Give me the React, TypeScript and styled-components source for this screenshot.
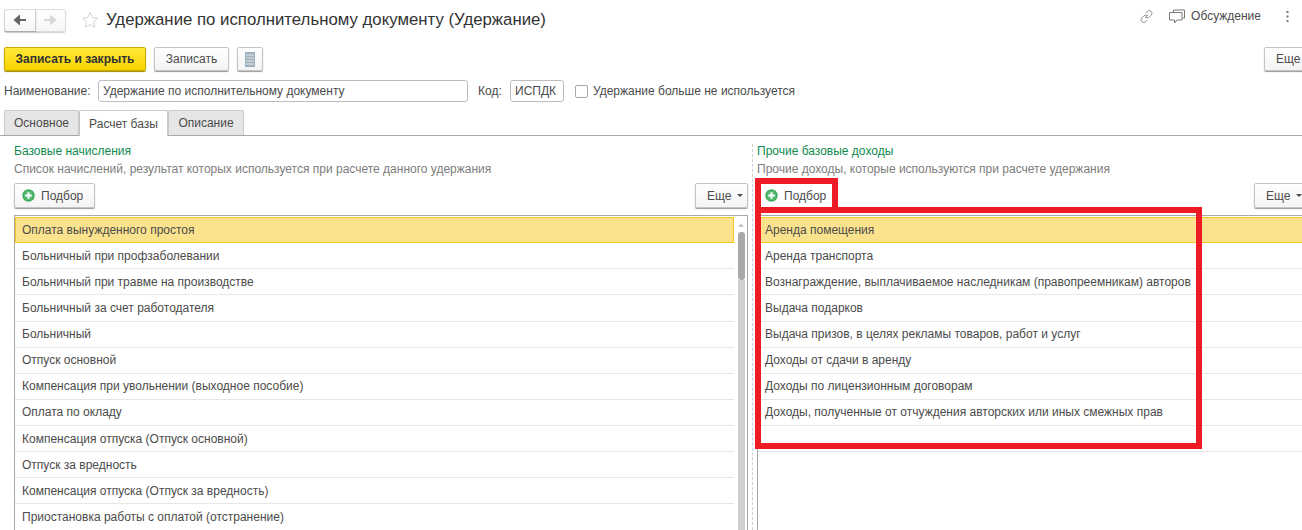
import React from "react";
import styled, { createGlobalStyle } from "styled-components";

const Global = createGlobalStyle`
  html, body { margin: 0; padding: 0; height: 530px; overflow: hidden; background: #fff; }
  body { font-family: "Liberation Sans", Arial, sans-serif; font-size: 12px; color: #4b4b4b; }
  * { box-sizing: border-box; }
`;

const Page = styled.div`
  position: relative;
  width: 1302px;
  height: 530px;
  overflow: hidden;
  background: #fff;
`;
const Header = styled.header`
  display: flex;
  align-items: center;
  height: 34px;
  padding: 6px 0 0 4px;
`;
const NavGroup = styled.div`
  display: flex;
  width: 62px;
  height: 23px;
  border: 1px solid #dcdcdc;
  border-radius: 3px;
  box-shadow: 0 1px 1px #cfcfcf;
  background: linear-gradient(#fff, #f6f6f6);
`;
const NavBtn = styled.div<{ $on?: boolean }>`
  flex: 1;
  display: flex;
  align-items: center;
  justify-content: center;
  ${(p) => (p.$on ? "border-right: 1px solid #cfcfcf; box-shadow: 0 1px 1px #aaa;" : "")}
`;
const StarBox = styled.div`
  display: flex;
  margin-left: 15px;
  width: 20px;
`;
const Title = styled.h1`
  margin: 0 0 0 5px;
  font-size: 16.8px;
  font-weight: 400;
  color: #333;
  white-space: nowrap;
`;
const HeaderRight = styled.div`
  margin-left: auto;
  display: flex;
  align-items: center;
  height: 20px;
  margin-top: -8px;
  padding-right: 13px;
`;
const ChatIcon = styled.svg`
  margin-left: 15px;
`;
const Discuss = styled.span`
  margin: 0 25px 0 6px;
  color: #4b4b4b;
`;
const CommandBar = styled.div`
  display: flex;
  align-items: center;
  height: 24px;
  margin-top: 13px;
  padding-left: 4px;
`;
const Btn = styled.button<{ $w: number; $ml?: number; $h?: number }>`
  display: flex;
  align-items: center;
  justify-content: center;
  flex: none;
  width: ${(p) => p.$w}px;
  height: ${(p) => p.$h ?? 24}px;
  margin-left: ${(p) => p.$ml ?? 0}px;
  padding: 0;
  font: 12px "Liberation Sans", Arial, sans-serif;
  color: #4b4b4b;
  background: linear-gradient(#fff, #f4f4f4);
  border: 1px solid #c4c4c4;
  border-radius: 2px;
  box-shadow: 0 1px 1px #9a9a9a;
`;
const PrimaryBtn = styled(Btn)`
  background: linear-gradient(#ffe93a, #f9d400);
  border-color: #c9a800;
  color: #333;
  font-weight: 700;
  box-shadow: 0 1px 1px #a08a00;
`;
const MoreTop = styled(Btn)`
  margin-left: auto;
  margin-right: -24px;
  justify-content: flex-start;
  padding-left: 11px;
`;
const FormRow = styled.div`
  display: flex;
  align-items: center;
  height: 22px;
  margin-top: 9px;
  padding-left: 4px;
`;
const Label = styled.label<{ $w: number; $ml?: number }>`
  flex: none;
  width: ${(p) => p.$w}px;
  margin-left: ${(p) => p.$ml ?? 0}px;
  color: #4b4b4b;
`;
const Field = styled.div<{ $w: number }>`
  flex: none;
  display: flex;
  align-items: center;
  width: ${(p) => p.$w}px;
  height: 22px;
  padding-left: 4px;
  border: 1px solid #bdbdbd;
  border-radius: 3px;
  color: #4b4b4b;
`;
const Check = styled.span`
  flex: none;
  width: 13px;
  height: 13px;
  margin: 0 5px 0 11px;
  border: 1px solid #a8a8a8;
  border-radius: 2px;
`;
const Tabs = styled.div`
  display: flex;
  height: 26px;
  margin-top: 8px;
  padding-left: 4px;
  border-bottom: 1px solid #a9a9a9;
`;
const Tab = styled.div<{ $w: number; $active?: boolean }>`
  display: flex;
  align-items: center;
  justify-content: center;
  width: ${(p) => p.$w}px;
  height: ${(p) => (p.$active ? 26 : 25)}px;
  background: ${(p) => (p.$active ? "#fff" : "#e6e6e6")};
  border: 1px solid #c8c8c8;
  border-bottom: none;
  border-radius: 2px 2px 0 0;
  position: relative;
  z-index: 1;
`;
const Columns = styled.div`
  display: grid;
  grid-template-columns: 738px 560px;
  padding: 8px 0 0 14px;
  height: 394px;
`;
const Column = styled.section<{ $right?: boolean }>`
  display: flex;
  flex-direction: column;
  min-width: 0;
  ${(p) => (p.$right ? `padding-left: 4px; border-left: 1px dashed #cfcfcf;` : "")}
`;
const Heading = styled.div`
  height: 14px;
  line-height: 14px;
  color: #0f8a4f;
`;
const Hint = styled.div`
  height: 14px;
  line-height: 14px;
  margin-top: 4px;
  color: #7d7d7d;
`;
const Bar = styled.div<{ $pr: number }>`
  display: flex;
  align-items: center;
  justify-content: space-between;
  height: 25px;
  margin-top: 7px;
  padding-right: ${(p) => p.$pr}px;
`;
const PickBtn = styled(Btn)`
  justify-content: flex-start;
  gap: 6px;
  padding-left: 7px;
`;
const PickFlat = styled.div`
  display: flex;
  align-items: center;
  gap: 6px;
  padding-left: 8px;
  height: 25px;
`;
const Caret = styled.span`
  width: 0;
  height: 0;
  margin-left: 6px;
  border-left: 3px solid transparent;
  border-right: 3px solid transparent;
  border-top: 3px solid #4b4b4b;
`;
const MoreBtn = styled(Btn)`
  justify-content: flex-start;
  padding-left: 11px;
`;
const Table = styled.div<{ $w: number }>`
  position: relative;
  width: ${(p) => p.$w}px;
  height: 315px;
  margin-top: 7px;
  padding-top: 1px;
  border-top: 1px solid #a9a9a9;
  border-left: 1px solid #a9a9a9;
  overflow: hidden;
`;
const Row = styled.div<{ $sel?: boolean }>`
  display: flex;
  align-items: center;
  height: 26.135px;
  padding-left: ${(p) => (p.$sel ? 6 : 7)}px;
  color: #4b4b4b;
  white-space: nowrap;
  border-bottom: 1px solid #e6e6e6;
  ${(p) =>
    p.$sel
      ? `background: #fbe38e; border: 1px solid #f4c722; box-shadow: 0 1px 0 #fff;`
      : ""}
`;
const LeftRows = styled.div`
  width: 719px;
`;
const Scroll = styled.div`
  position: absolute;
  top: 1px;
  right: 3px;
  bottom: 0;
  width: 8px;
  display: flex;
  flex-direction: column;
  align-items: center;
`;
const ScrollArrow = styled.span`
  margin-top: 6px;
  width: 0;
  height: 0;
  border-left: 3px solid transparent;
  border-right: 3px solid transparent;
  border-bottom: 4px solid #c8c8c8;
`;
const Thumb = styled.div`
  margin-top: 5px;
  width: 7px;
  height: 48px;
  border-radius: 3px;
  background: #a9a9a9;
`;
const Track = styled.div`
  width: 7px;
  flex: 1;
  background: #cfcfcf;
`;
const TableEdge = styled.div`
  position: absolute;
  top: 0;
  right: 0;
  bottom: 0;
  width: 1px;
  background: #a9a9a9;
`;
const Callout = styled.div<{ $x: number; $y: number; $w: number; $h: number }>`
  position: absolute;
  left: ${(p) => p.$x}px;
  top: ${(p) => p.$y}px;
  width: ${(p) => p.$w}px;
  height: ${(p) => p.$h}px;
  border: 6px solid #ed1c24;
  pointer-events: none;
`;

const Plus = () => (
  <svg width="13" height="13" viewBox="0 0 13 13">
    <circle cx="6.5" cy="6.5" r="6.2" fill="#3fa95b" />
    <circle cx="6.5" cy="6.5" r="4.8" fill="#55bb6e" />
    <path d="M6.5 3.2v6.6M3.2 6.5h6.6" stroke="#fff" strokeWidth="2" />
  </svg>
);

const left = [
  "Оплата вынужденного простоя",
  "Больничный при профзаболевании",
  "Больничный при травме на производстве",
  "Больничный за счет работодателя",
  "Больничный",
  "Отпуск основной",
  "Компенсация при увольнении (выходное пособие)",
  "Оплата по окладу",
  "Компенсация отпуска (Отпуск основной)",
  "Отпуск за вредность",
  "Компенсация отпуска (Отпуск за вредность)",
  "Приостановка работы с оплатой (отстранение)",
];
const right = [
  "Аренда помещения",
  "Аренда транспорта",
  "Вознаграждение, выплачиваемое наследникам (правопреемникам) авторов",
  "Выдача подарков",
  "Выдача призов, в целях рекламы товаров, работ и услуг",
  "Доходы от сдачи в аренду",
  "Доходы по лицензионным договорам",
  "Доходы, полученные от отчуждения авторских или иных смежных прав",
  "",
];

export default function App() {
  return (
    <Page>
      <Global />
      <Header>
        <NavGroup>
          <NavBtn $on>
            <svg width="14" height="10" viewBox="0 0 14 10">
              <path d="M13 5H5M6 1.5 2 5l4 3.5z" stroke="#666" strokeWidth="2" fill="#666" />
            </svg>
          </NavBtn>
          <NavBtn>
            <svg width="14" height="10" viewBox="0 0 14 10">
              <path d="M1 5h8M8 1.5 12 5 8 8.500z" stroke="#d8d8d8" strokeWidth="2" fill="#d8d8d8" />
            </svg>
          </NavBtn>
        </NavGroup>
        <StarBox>
          <svg width="18" height="18" viewBox="0 0 18 18">
            <path d="M9 1.500l2.300 5 5.400.6-4 3.700 1.100 5.400L9 13.500l-4.800 2.700 1.100-5.400-4-3.700 5.400-.6z" fill="none" stroke="#d4d4d4" />
          </svg>
        </StarBox>
        <Title>Удержание по исполнительному документу (Удержание)</Title>
        <HeaderRight>
          <svg width="15" height="15" viewBox="0 0 16 16" fill="none" stroke="#8c8c8c" strokeWidth="1">
            <path d="M6.500 9.500 10 6M7 4.500l2-2a2.700 2.700 0 0 1 4 4l-2 2a2.700 2.700 0 0 1-3.500.3" />
            <path d="M9 11.500l-2 2a2.700 2.700 0 0 1-4-4l2-2A2.700 2.700 0 0 1 8.500 7.200" />
          </svg>
          <ChatIcon width="16" height="15" viewBox="0 0 16 15" fill="none" stroke="#777" strokeWidth="1">
            <path d="M4.500 3V1h11v8h-2" />
            <path d="M.5 3.500h12.500v7.500H8l-2.500 3v-3h-5z" />
          </ChatIcon>
          <Discuss>Обсуждение</Discuss>
          <svg width="3" height="11" viewBox="0 0 3 11" fill="#777">
            <rect x="0.500" y="0" width="2" height="2" />
            <rect x="0.500" y="4.500" width="2" height="2" />
            <rect x="0.500" y="9" width="2" height="2" />
          </svg>
        </HeaderRight>
      </Header>
      <CommandBar>
        <PrimaryBtn $w={142}>Записать и закрыть</PrimaryBtn>
        <Btn $w={75} $ml={8}>Записать</Btn>
        <Btn $w={26} $ml={8}>
          <svg width="10" height="15" viewBox="0 0 10 15">
            <rect width="10" height="15" fill="#9fb0bd" />
            <path d="M1 3h8M1 6h8M1 9h8M1 12h8" stroke="#e4eaee" strokeWidth="1" />
          </svg>
        </Btn>
        <MoreTop $w={62}>Еще</MoreTop>
      </CommandBar>
      <FormRow>
        <Label $w={94}>Наименование:</Label>
        <Field $w={370}>Удержание по исполнительному документу</Field>
        <Label $w={32} $ml={10}>Код:</Label>
        <Field $w={54}>ИСПДК</Field>
        <Check />
        <span>Удержание больше не используется</span>
      </FormRow>
      <Tabs>
        <Tab $w={75}>Основное</Tab>
        <Tab $w={89} $active>Расчет базы</Tab>
        <Tab $w={76}>Описание</Tab>
      </Tabs>
      <Columns>
        <Column>
          <Heading>Базовые начисления</Heading>
          <Hint>Список начислений, результат которых используется при расчете данного удержания</Hint>
          <Bar $pr={4}>
            <PickBtn $w={81} $h={25}><Plus />Подбор</PickBtn>
            <MoreBtn $w={53} $h={25}>Еще<Caret /></MoreBtn>
          </Bar>
          <Table $w={734}>
            <LeftRows>
              {left.map((t, i) => (
                <Row key={t} $sel={i === 0}>{t}</Row>
              ))}
            </LeftRows>
            <Scroll>
              <ScrollArrow />
              <Thumb />
              <Track />
            </Scroll>
            <TableEdge />
          </Table>
        </Column>
        <Column $right>
          <Heading>Прочие базовые доходы</Heading>
          <Hint>Прочие доходы, которые используются при расчете удержания</Hint>
          <Bar $pr={5}>
            <PickFlat><Plus />Подбор</PickFlat>
            <MoreBtn $w={53} $h={25}>Еще<Caret /></MoreBtn>
          </Bar>
          <Table $w={560}>
            {right.map((t, i) => (
              <Row key={i} $sel={i === 0}>{t}</Row>
            ))}
          </Table>
        </Column>
      </Columns>
      <Callout $x={755} $y={178} $w={83} $h={35} />
      <Callout $x={755} $y={207} $w={447} $h={242} />
    </Page>
  );
}
